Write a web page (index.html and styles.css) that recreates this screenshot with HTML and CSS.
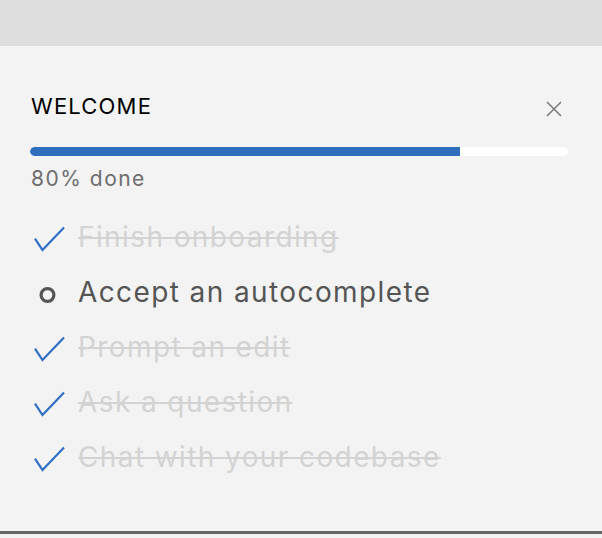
FILE: index.html
```html
<!DOCTYPE html>
<html>
<head>
<meta charset="utf-8">
<link rel="stylesheet" href="styles.css">
</head>
<body>
<div class="app">
  <div class="topbar"></div>
  <section class="panel">
    <header class="header">
      <h1 class="title">WELCOME</h1>
      <button class="close" aria-label="Close">
        <svg width="16" height="16" viewBox="0 0 16 16"><path d="M1 1 L15 15 M15 1 L1 15" stroke="#777" stroke-width="1.5" fill="none"/></svg>
      </button>
    </header>
    <div class="progress"><div class="progress-fill" style="width:80%"></div></div>
    <div class="progress-label">80% done</div>
    <ul class="tasks">
      <li class="task done">
        <svg class="icon" width="40" height="32" viewBox="0 0 40 32"><path d="M5 16.6 L12.5 28.1 L34 5.6" stroke="#2f6fc6" stroke-width="2.2" fill="none"/></svg>
        <span class="label">Finish onboarding</span>
      </li>
      <li class="task">
        <svg class="icon" width="40" height="32" viewBox="0 0 40 32"><circle cx="17.5" cy="18" r="6.4" stroke="#555" stroke-width="3.2" fill="none"/></svg>
        <span class="label">Accept an autocomplete</span>
      </li>
      <li class="task done">
        <svg class="icon" width="40" height="32" viewBox="0 0 40 32"><path d="M5 16.6 L12.5 28.1 L34 5.6" stroke="#2f6fc6" stroke-width="2.2" fill="none"/></svg>
        <span class="label">Prompt an edit</span>
      </li>
      <li class="task done">
        <svg class="icon" width="40" height="32" viewBox="0 0 40 32"><path d="M5 16.6 L12.5 28.1 L34 5.6" stroke="#2f6fc6" stroke-width="2.2" fill="none"/></svg>
        <span class="label">Ask a question</span>
      </li>
      <li class="task done">
        <svg class="icon" width="40" height="32" viewBox="0 0 40 32"><path d="M5 16.6 L12.5 28.1 L34 5.6" stroke="#2f6fc6" stroke-width="2.2" fill="none"/></svg>
        <span class="label">Chat with your codebase</span>
      </li>
    </ul>
  </section>
</div>
</body>
</html>
```
FILE: styles.css
```css
html, body {
  margin: 0;
  padding: 0;
  height: 100%;
}
body {
  background: #f3f3f3;
  font-family: Inter, "Liberation Sans", sans-serif;
}
.app {
  display: grid;
  grid-template-rows: 46px 488px;
  height: 538px;
}
.topbar {
  background: #dddddd;
}
.panel {
  background: #f3f3f3;
  border-bottom: 3px solid #666666;
  padding: 47px 34px 0 30px;
  box-sizing: border-box;
  display: flex;
  flex-direction: column;
}
.header {
  display: flex;
  justify-content: space-between;
  align-items: center;
  height: 26px;
}
.title {
  margin: 0 0 0 1px;
  font-size: 22px;
  line-height: 26px;
  font-weight: 400;
  color: #000;
  letter-spacing: 1.2px;
}
.close {
  background: none;
  border: none;
  padding: 0;
  margin: 6px 6px 0 0;
  width: 16px;
  height: 16px;
  display: flex;
}
.progress {
  margin-top: 28px;
  height: 9px;
  background: #ffffff;
  border-radius: 5px;
  overflow: hidden;
}
.progress-fill {
  height: 100%;
  background: #2f6dbd;
  border-radius: 5px 0 0 5px;
}
.progress-label {
  margin-top: 10px;
  margin-left: 1px;
  font-size: 21px;
  line-height: 26px;
  color: #6e6e6e;
  letter-spacing: 1.5px;
}
.tasks {
  list-style: none;
  margin: 18px 0 0 0;
  padding: 0;
}
.task {
  display: grid;
  grid-template-columns: 48px 1fr;
  align-items: center;
  height: 55px;
  font-size: 28px;
  line-height: 55px;
  color: #555555;
  letter-spacing: 1.4px;
}
.icon {
  display: block;
}
.task.done .label {
  color: #d3d3d3;
  text-decoration: line-through;
  text-decoration-thickness: 2px;
}
```
